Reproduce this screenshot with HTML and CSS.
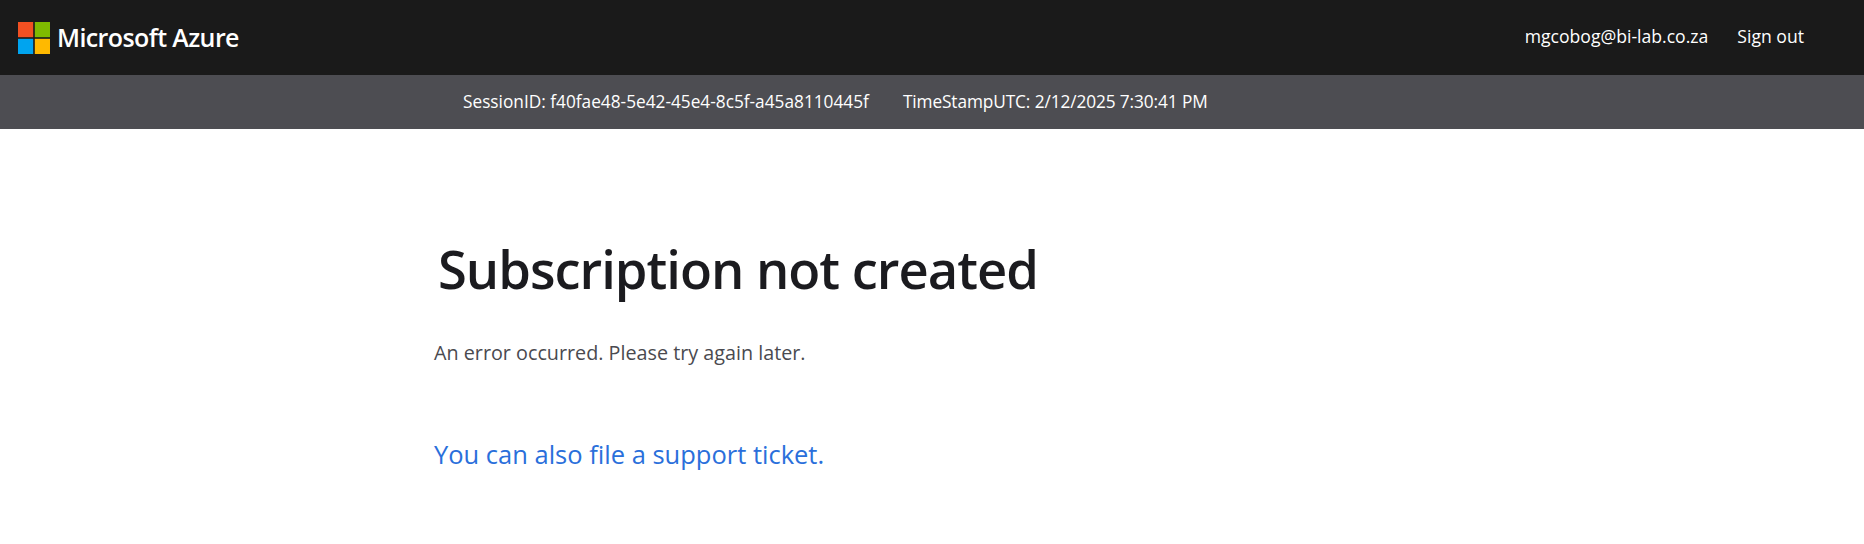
FILE: index.html
```html
<!DOCTYPE html>
<html lang="en">
<head>
    <meta charset="UTF-8">
    <title>Subscription not created</title>
    <link rel="stylesheet" href="styles.css">
</head>
<body>
    <header class="topbar">
        <a class="brand" href="#">
            <svg class="brand-logo" width="32" height="32" viewBox="0 0 32 32" aria-hidden="true">
                <rect x="0" y="0" width="15.2" height="15.2" fill="#f25022"></rect>
                <rect x="16.8" y="0" width="15.2" height="15.2" fill="#7fba00"></rect>
                <rect x="0" y="16.8" width="15.2" height="15.2" fill="#00a4ef"></rect>
                <rect x="16.8" y="16.8" width="15.2" height="15.2" fill="#ffb900"></rect>
            </svg>
            <span class="brand-name">Microsoft Azure</span>
        </a>
        <nav class="account">
            <span>mgcobog@bi-lab.co.za</span>
            <a href="#">Sign out</a>
        </nav>
    </header>

    <div class="session">
        <span>SessionID: f40fae48-5e42-45e4-8c5f-a45a8110445f</span>
        <span class="timestamp">TimeStampUTC: 2/12/2025 7:30:41 PM</span>
    </div>

    <main class="content">
        <h1>Subscription not created</h1>
        <p class="message">An error occurred. Please try again later.</p>
        <a class="support" href="#">You can also file a support ticket.</a>
    </main>
</body>
</html>
```

FILE: styles.css
```css
html, body {
    height: 100%;
}
body {
    margin: 0;
    font-family: "Open Sans", "Noto Sans", sans-serif;
    background-color: #fff;
    overflow: hidden;
}
a {
    text-decoration: none;
}
.topbar {
    display: flex;
    align-items: center;
    justify-content: space-between;
    height: 75px;
    padding: 0 60px 0 18px;
    background-color: #1a1a1a;
    color: #fff;
}
.brand {
    display: flex;
    align-items: center;
    gap: 7px;
    color: #fff;
}
.brand-logo {
    display: block;
}
.brand-name {
    margin-top: -1px;
    font-size: 25px;
    font-weight: 600;
    letter-spacing: -0.6px;
}
.account {
    display: flex;
    gap: 29px;
    margin-top: -3px;
    font-size: 17.6px;
}
.account a {
    color: #fff;
}
.session {
    display: flex;
    align-items: center;
    gap: 34px;
    height: 54px;
    padding: 0 0 2px 463px;
    box-sizing: border-box;
    background-color: #4d4d52;
    color: #fff;
    font-size: 17.25px;
}
.timestamp {
    letter-spacing: -0.1px;
}
.content {
    padding: 105px 0 0 434px;
}
h1 {
    margin: 0 0 0 4px;
    color: #1b1b1f;
    font-size: 52.5px;
    font-weight: 600;
    letter-spacing: -1px;
    line-height: 70px;
}
.message {
    margin: 36px 0 0;
    color: #4a4a4f;
    font-size: 19.75px;
    line-height: 26px;
}
.support {
    display: block;
    margin-top: 71px;
    color: #2a6fdb;
    font-size: 25.5px;
    line-height: 34px;
}
```
